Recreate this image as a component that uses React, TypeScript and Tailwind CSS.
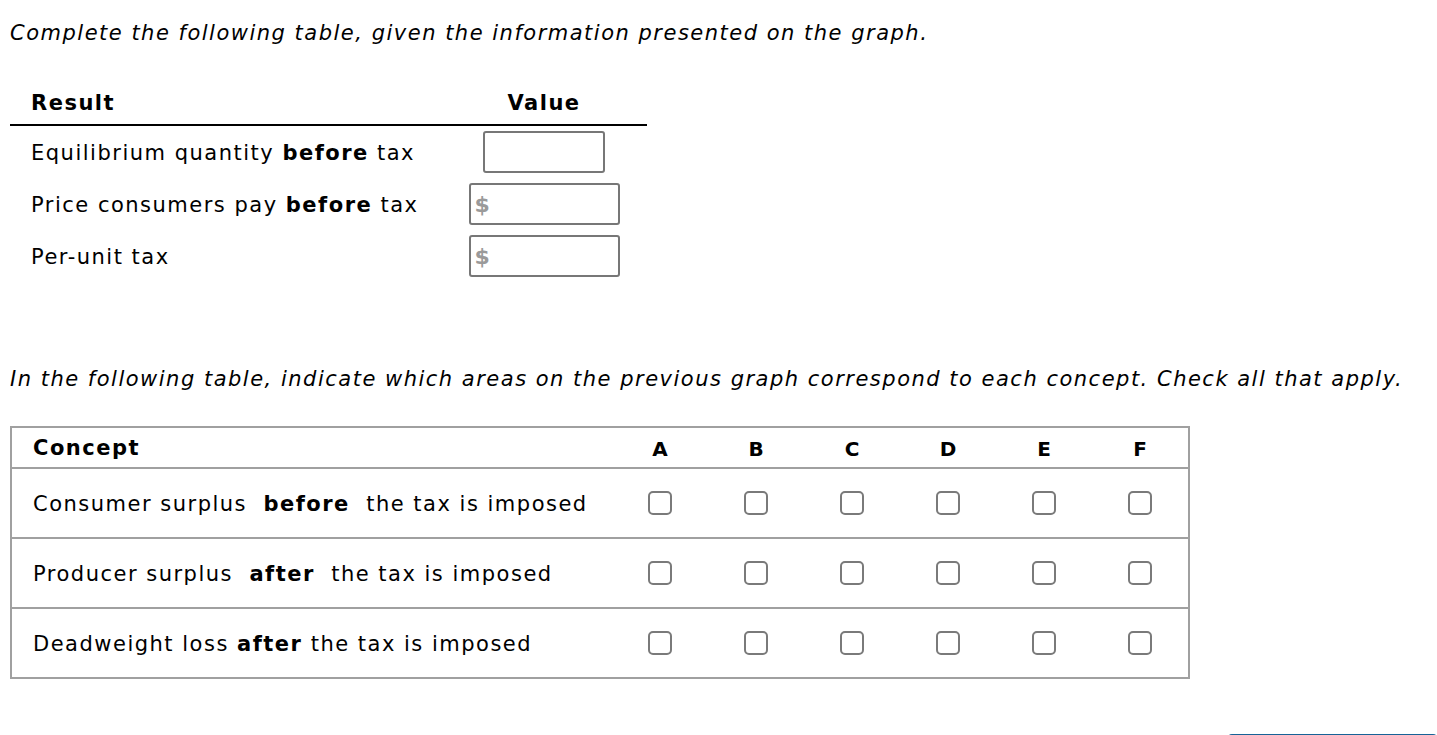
const font = "font-['DejaVu_Sans',Verdana,sans-serif]";

const resultRows = [
  { label: <>Equilibrium quantity <b>before</b> tax</>, dollar: false },
  { label: <>Price consumers pay <b>before</b> tax</>, dollar: true },
  { label: <>Per-unit tax</>, dollar: true },
];

const areas = ["A", "B", "C", "D", "E", "F"];

const concepts = [
  <>Consumer surplus&nbsp; <b>before</b>&nbsp; the tax is imposed</>,
  <>Producer surplus&nbsp; <b>after</b>&nbsp; the tax is imposed</>,
  <>Deadweight loss <b>after</b> the tax is imposed</>,
];

function ValueInput({ dollar }: { dollar: boolean }) {
  if (!dollar) {
    return (
      <div className="h-[42px] w-[122px] rounded-[3px] border-2 border-[#777]" />
    );
  }
  return (
    <div className="flex h-[42px] w-[151px] items-center rounded-[3px] border-2 border-[#777] pl-[4px] text-[22px] font-semibold tracking-normal text-[#9a9a9a]">
      $
    </div>
  );
}

function Checkbox() {
  return (
    <div className="h-[24px] w-[24px] rounded-[5px] border-2 border-[#7a7a7a] bg-white" />
  );
}

export default function App() {
  return (
    <div className={`${font} h-[735px] overflow-hidden bg-white text-[21px] tracking-[1.5px] text-black`}>
      <div className="pl-[10px] pt-[21px]">
        <p className="italic leading-[24px]">
          Complete the following table, given the information presented on the graph.
        </p>

        <div className="mt-[37px] w-[637px]">
          <div className="flex h-[44px] items-center border-b-2 border-black font-bold">
            <div className="w-[431px] pl-[21px] pt-[2px]">Result</div>
            <div className="flex-1 pt-[2px] text-center">Value</div>
          </div>
          {resultRows.map((row, i) => (
            <div key={i} className="flex h-[52px] items-center">
              <div className="w-[431px] pl-[21px] pt-[3px]">{row.label}</div>
              <div className="flex flex-1 justify-center">
                <ValueInput dollar={row.dollar} />
              </div>
            </div>
          ))}
        </div>

        <p className="mt-[85px] italic leading-[24px]">
          In the following table, indicate which areas on the previous graph correspond to each concept. Check all that apply.
        </p>

        <div className="mt-[35px] w-[1180px] border-2 border-[#a0a0a0]">
          <div className="flex h-[39px] items-center font-bold">
            <div className="w-[600px] pl-[21px] pt-[2px]">Concept</div>
            {areas.map((a) => (
              <div key={a} className="flex-1 pt-[2px] text-center text-[20px] tracking-normal">
                {a}
              </div>
            ))}
          </div>
          {concepts.map((c, i) => (
            <div key={i} className="flex h-[70px] items-center border-t-2 border-[#a0a0a0]">
              <div className="w-[600px] pl-[21px] pt-[3px]">{c}</div>
              {areas.map((a) => (
                <div key={a} className="flex flex-1 justify-center">
                  <Checkbox />
                </div>
              ))}
            </div>
          ))}
        </div>

        <div className="mt-[55px] flex justify-end">
          <button className="h-[44px] w-[209px] rounded-t-[4px] bg-[#176397]" />
        </div>
      </div>
    </div>
  );
}
